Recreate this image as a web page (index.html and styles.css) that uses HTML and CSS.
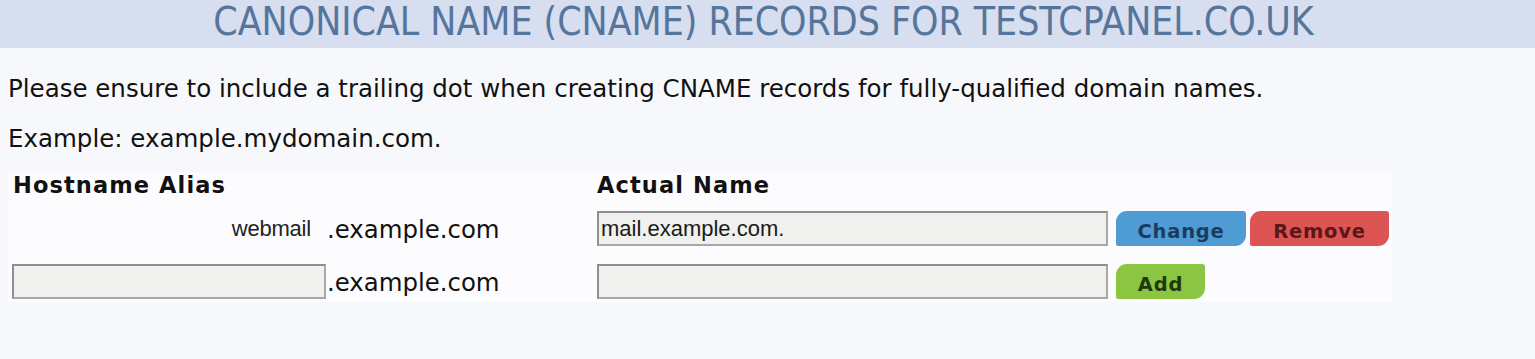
FILE: index.html
```html
<!DOCTYPE html>
<html>
<head>
<meta charset="utf-8">
<link rel="stylesheet" href="styles.css">
</head>
<body>
<h1 class="title">CANONICAL NAME (CNAME) RECORDS FOR TESTCPANEL.CO.UK</h1>
<p class="note first">Please ensure to include a trailing dot when creating CNAME records for fully-qualified domain names.</p>
<p class="note">Example: example.mydomain.com.</p>
<div class="records">
  <div class="col-head alias-head">Hostname Alias</div>
  <div class="col-head">Actual Name</div>
  <div></div>

  <div class="cell alias-name">webmail</div>
  <div class="cell domain">.example.com</div>
  <div class="cell field"><input class="text-input wide" type="text" value="mail.example.com."></div>
  <div class="cell actions">
    <button class="btn btn-blue">Change</button>
    <button class="btn btn-red">Remove</button>
  </div>

  <div class="cell field"><input class="text-input narrow" type="text" value=""></div>
  <div class="cell domain">.example.com</div>
  <div class="cell field"><input class="text-input wide" type="text" value=""></div>
  <div class="cell actions">
    <button class="btn btn-green">Add</button>
  </div>
</div>
</body>
</html>
```
FILE: styles.css
```css
html, body {
  margin: 0;
  padding: 0;
  background: #f7f8fc;
}
body {
  font-family: "DejaVu Sans", Verdana, sans-serif;
  color: #111;
}
.title {
  margin: 0;
  height: 48px;
  line-height: 43px;
  padding-right: 8px;
  background: #d6deef;
  color: #55759d;
  font-family: "DejaVu Sans Condensed", "DejaVu Sans", sans-serif;
  font-weight: normal;
  font-size: 38.8px;
  text-align: center;
}
.note {
  margin: 0;
  padding-left: 8px;
  font-size: 24.5px;
  line-height: 30px;
}
.note.first {
  margin-top: 26px;
}
.note + .note {
  margin-top: 20px;
}
.records {
  margin: 18px 0 0 8px;
  width: 1384px;
  padding: 0 0 3px 4px;
  box-sizing: border-box;
  background: #fcfcfe;
  display: grid;
  grid-template-columns: 315px 270px 519px auto;
  grid-template-rows: 39px 53px 35px;
}
.col-head {
  font-weight: bold;
  font-size: 22.5px;
  line-height: 26px;
  letter-spacing: 1.1px;
  align-self: end;
  padding-bottom: 13px;
}
.alias-head {
  grid-column: 1 / 3;
  padding-left: 1px;
}
.cell {
  height: 35px;
  display: flex;
  align-items: center;
}
.alias-name {
  justify-content: flex-end;
  padding-right: 16px;
  font-family: "Liberation Sans", Arial, sans-serif;
  font-size: 22px;
  letter-spacing: -0.2px;
  color: #222;
}
.domain {
  font-size: 24.4px;
  color: #111;
  padding-top: 2px;
  box-sizing: border-box;
}
.text-input {
  height: 35px;
  box-sizing: border-box;
  border: 2px solid #a8a8a8;
  border-top-color: #8e8e8e;
  border-left-color: #8e8e8e;
  background: #f0f0ee;
  font-family: "Liberation Sans", Arial, sans-serif;
  font-size: 22px;
  color: #1a1a1a;
  padding: 0 2px;
  margin: 0;
}
.text-input.wide {
  width: 511px;
}
.text-input.narrow {
  width: 314px;
}
.actions {
  gap: 4px;
}
.btn {
  height: 35px;
  border: none;
  margin: 0;
  font-family: "DejaVu Sans", Verdana, sans-serif;
  font-weight: bold;
  font-size: 19.5px;
  letter-spacing: 0.8px;
  border-radius: 11px 3px 11px 2px;
  padding: 5px 0 0 0;
  box-sizing: border-box;
}
.btn-blue {
  width: 130px;
  background: #4e9cd3;
  color: #1d3b60;
}
.btn-red {
  width: 139px;
  background: #dc5453;
  color: #5a1818;
}
.btn-green {
  width: 89px;
  background: #8bc541;
  color: #1e3a0c;
}
```
